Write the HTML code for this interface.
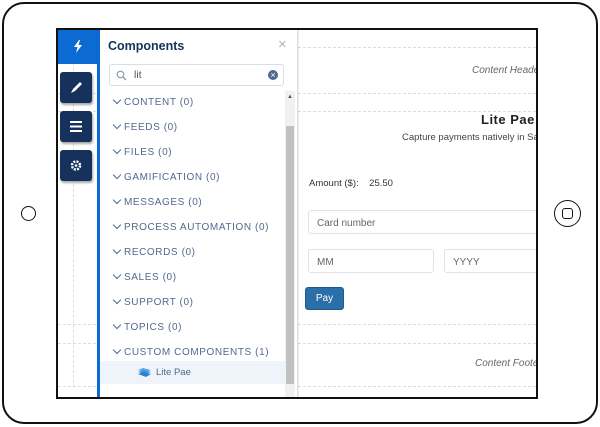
<!DOCTYPE html>
<html><head><style>
*{margin:0;padding:0;box-sizing:border-box}
body{width:600px;height:427px;background:#fff;position:relative;overflow:hidden;font-family:"Liberation Sans",sans-serif}
.a{position:absolute}
.tab{left:2px;top:2px;width:596px;height:422px;border:2.5px solid #111;border-radius:22px}
.screen{left:56px;top:28px;width:482px;height:371px;border:2px solid #111;overflow:hidden;background:#fff}
.dl{position:absolute;left:0;right:0;border-top:1px dashed #ddd}
.row{position:absolute;left:14px;font-size:10px;color:#54698d;letter-spacing:.6px}
.row:before{content:"";position:absolute;left:0;top:0px;width:5px;height:5px;border-right:1.3px solid #54698d;border-bottom:1.3px solid #54698d;transform:rotate(45deg)}
.row span{margin-left:10px}
.btn{position:absolute;left:2px;width:32px;height:31px;background:#16325c;border-radius:3px;box-shadow:1px 2px 2px rgba(0,0,0,.35)}
.inp{position:absolute;border:1px solid #dde3ea;border-radius:3px;font-size:10px;color:#666;padding:7px 8px}
</style></head><body>
<div class="a tab"></div>
<div class="a" style="left:21px;top:206px;width:15px;height:15px;border:1.5px solid #111;border-radius:50%"></div>
<div class="a" style="left:554px;top:200px;width:27px;height:27px;border:1.5px solid #111;border-radius:50%"></div>
<div class="a" style="left:562px;top:208px;width:11px;height:11px;border:1.5px solid #111;border-radius:3px"></div>
<div class="a screen">
 <div class="dl" style="top:17px"></div>
 <div class="dl" style="top:63px"></div>
 <div class="dl" style="top:81px"></div>
 <div class="dl" style="top:294px"></div>
 <div class="dl" style="top:313px"></div>
 <div class="dl" style="top:356px"></div>
 <div class="a" style="left:15px;top:18px;height:340px;border-left:1px dashed #ddd"></div>
 <div class="a" style="left:414px;top:35px;font-size:10px;font-style:italic;color:#666;white-space:nowrap">Content Header</div>
 <div class="a" style="left:423px;top:82px;font-size:13px;font-weight:bold;color:#222;white-space:nowrap;letter-spacing:.5px">Lite Pae</div>
 <div class="a" style="left:344px;top:102px;font-size:9.5px;color:#444;white-space:nowrap">Capture payments natively in Salesforce</div>
 <div class="a" style="left:251px;top:148px;font-size:9.5px;color:#333;white-space:nowrap">Amount ($):&nbsp;&nbsp;&nbsp;&nbsp;25.50</div>
 <div class="inp" style="left:250px;top:180px;width:240px;height:24px">Card number</div>
 <div class="inp" style="left:250px;top:219px;width:126px;height:24px">MM</div>
 <div class="inp" style="left:386px;top:219px;width:120px;height:24px">YYYY</div>
 <div class="a" style="left:247px;top:257px;width:39px;height:23px;background:#2a6fa8;border:1px solid #1f5a8c;border-radius:3px;color:#fff;font-size:10px;text-align:center;line-height:21px">Pay</div>
 <div class="a" style="left:417px;top:328px;font-size:10px;font-style:italic;color:#666;white-space:nowrap">Content Footer</div>
 <div class="a" style="left:0;top:0;width:41px;height:34px;background:#0b6bd3"></div>
 <svg class="a" style="left:14px;top:10px" width="12" height="13" viewBox="0 0 12 13"><path d="M7 0L2 7h3.5L4 13l6-8H6.5L8 0z" fill="#fff"/></svg>
 <div class="btn" style="top:42px"><svg width="32" height="31"><path d="M11 21l2-4 7-7 2 2-7 7z" fill="#fff"/></svg></div>
 <div class="btn" style="top:81px"><svg width="32" height="31"><g fill="#fff"><rect x="10" y="10" width="12" height="2"/><rect x="10" y="14.5" width="12" height="2"/><rect x="10" y="19" width="12" height="2"/></g></svg></div>
 <div class="btn" style="top:120px"><svg width="32" height="31"><circle cx="16" cy="15.5" r="4" fill="none" stroke="#fff" stroke-width="2.5" stroke-dasharray="2 1.2"/><circle cx="16" cy="15.5" r="1.3" fill="#fff"/></svg></div>
 <div class="a" style="left:39px;top:0;width:200px;height:369px;background:#fff;border-left:3px solid #0b6bd3;border-bottom:2px solid #0b6bd3;box-shadow:1px 0 2px rgba(0,0,0,.2)">
  <div class="a" style="left:8px;top:9px;font-size:12.5px;font-weight:bold;color:#16325c">Components</div>
  <div class="a" style="left:178px;top:6px;font-size:15px;color:#a8b7c7">×</div>
  <div class="a" style="left:9px;top:34px;width:175px;height:22px;border:1px solid #d8dde6;border-radius:3px">
   <svg class="a" style="left:6px;top:5px" width="11" height="11"><circle cx="4.5" cy="4.5" r="3.3" fill="none" stroke="#8a9aaf" stroke-width="1.2"/><path d="M7 7l3 3" stroke="#8a9aaf" stroke-width="1.3"/></svg>
   <div class="a" style="left:24px;top:4px;font-size:10.5px;color:#555">lit</div>
   <div class="a" style="left:158px;top:5px;width:10px;height:10px;border-radius:50%;background:#54698d;color:#fff;font-size:9px;line-height:10px;text-align:center">×</div>
  </div>
  <div class="a" style="left:185px;top:61px;width:10px;height:306px;background:#f1f1f1"></div>
  <div class="a" style="left:186px;top:96px;width:8px;height:258px;background:#c1c1c1"></div>
  <div class="a" style="left:187px;top:64px;font-size:6px;color:#555">▲</div>
  <div class="a" style="left:0;top:331px;width:185px;height:23px;background:#eef4f9"></div>
  <div class="row" style="top:67px"><span>CONTENT (0)</span></div>
  <div class="row" style="top:92px"><span>FEEDS (0)</span></div>
  <div class="row" style="top:117px"><span>FILES (0)</span></div>
  <div class="row" style="top:142px"><span>GAMIFICATION (0)</span></div>
  <div class="row" style="top:167px"><span>MESSAGES (0)</span></div>
  <div class="row" style="top:192px"><span>PROCESS AUTOMATION (0)</span></div>
  <div class="row" style="top:217px"><span>RECORDS (0)</span></div>
  <div class="row" style="top:242px"><span>SALES (0)</span></div>
  <div class="row" style="top:267px"><span>SUPPORT (0)</span></div>
  <div class="row" style="top:292px"><span>TOPICS (0)</span></div>
  <div class="row" style="top:317px"><span>CUSTOM COMPONENTS (1)</span></div>
  <svg class="a" style="left:37px;top:337px" width="15" height="11"><path d="M1 3l5-2 8 2-5 2z" fill="#5aa9e6"/><path d="M1 5l5-2 8 2-5 2z" fill="#3f95dc"/><path d="M1 7l5-2 8 2-5 3z" fill="#2a82cf"/></svg>
  <div class="a" style="left:56px;top:337px;font-size:9.5px;color:#54698d">Lite Pae</div>
 </div>
</div>
</body></html>
